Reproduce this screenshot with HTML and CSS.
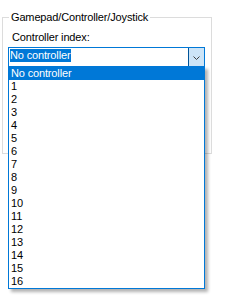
FILE: index.html
```html
<!DOCTYPE html>
<html lang="en">
<head>
    <meta charset="UTF-8">
    <title>Gamepad settings</title>
    <link rel="stylesheet" href="styles.css">
</head>
<body>
    <div class="groupBox">
        <div class="groupTitle">Gamepad/Controller/Joystick</div>
        <div class="fieldLabel">Controller index:</div>
        <div class="combo">
            <div class="comboValue"><span class="comboSel">No controller</span></div>
            <div class="comboButton">
                <svg width="7" height="4" viewBox="0 0 7 4"><polyline points="0.5,0.5 3.5,3.5 6.5,0.5" fill="none" stroke="#404040" stroke-width="1"/></svg>
            </div>
            <div class="comboList">
                <div class="comboItem selected">No controller</div>
                <div class="comboItem">1</div>
                <div class="comboItem">2</div>
                <div class="comboItem">3</div>
                <div class="comboItem">4</div>
                <div class="comboItem">5</div>
                <div class="comboItem">6</div>
                <div class="comboItem">7</div>
                <div class="comboItem">8</div>
                <div class="comboItem">9</div>
                <div class="comboItem">10</div>
                <div class="comboItem">11</div>
                <div class="comboItem">12</div>
                <div class="comboItem">13</div>
                <div class="comboItem">14</div>
                <div class="comboItem">15</div>
                <div class="comboItem">16</div>
            </div>
        </div>
    </div>
</body>
</html>
```

FILE: styles.css
```css
html, body {
    height: 100%;
}
body {
    margin: 0;
    background: #ffffff;
    font-family: "Liberation Sans", Arial, sans-serif;
    font-size: 11px;
    letter-spacing: -0.15px;
    color: #000000;
}
.groupBox {
    box-sizing: border-box;
    width: 210px;
    height: 137px;
    margin: 17px 0 0 2px;
    padding: 0 5px;
    border: 1px solid #dcdcdc;
}
.groupTitle {
    display: table;
    margin: -7px 0 0 1px;
    padding: 0 2px;
    line-height: 13px;
    background: #ffffff;
}
.fieldLabel {
    margin: 7px 0 0 4px;
    line-height: 13px;
}
.combo {
    position: relative;
    box-sizing: border-box;
    width: 197px;
    height: 20px;
    margin-top: 3px;
    border: 1px solid #0078d7;
    display: flex;
}
.comboValue {
    flex: 1;
    padding: 1px 0 0 1px;
}
.comboSel {
    display: inline-block;
    line-height: 13px;
    padding: 0 1px 0 0;
    background: #0078d7;
    color: #ffffff;
}
.comboButton {
    width: 15px;
    border-left: 1px solid #005499;
    background: #cce4f7;
    display: flex;
    justify-content: center;
    align-items: center;
    padding-top: 1px;
}
.comboButton svg {
    display: block;
}
.comboList {
    position: absolute;
    top: 100%;
    left: -1px;
    z-index: 10;
    box-sizing: border-box;
    width: 197px;
    border: 1px solid #0078d7;
    background: #ffffff;
    box-shadow: 3px 3px 3px rgba(0, 0, 0, 0.3);
}
.comboItem {
    height: 13px;
    line-height: 13px;
    padding-left: 2px;
}
.comboItem.selected {
    background: #0078d7;
    color: #ffffff;
}
```
